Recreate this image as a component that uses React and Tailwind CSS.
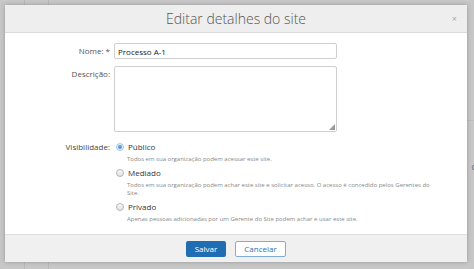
import React from "react";

const options = [
  {
    id: "publico",
    label: "Público",
    desc: "Todos em sua organização podem acessar este site.",
    checked: true,
  },
  {
    id: "mediado",
    label: "Mediado",
    desc: "Todos em sua organização podem achar este site e solicitar acesso. O acesso é concedido pelos Gerentes do Site.",
  },
  {
    id: "privado",
    label: "Privado",
    desc: "Apenas pessoas adicionadas por um Gerente do Site podem achar e usar este site.",
  },
];

function Radio({ checked }) {
  if (checked) {
    return (
      <span className="flex h-[8px] w-[8px] shrink-0 items-center justify-center rounded-full border border-[#a9c8e8] bg-[#e3eef9]">
        <span className="h-[4px] w-[4px] rounded-full bg-[#5b9bd8]" />
      </span>
    );
  }
  return (
    <span className="h-[8px] w-[8px] shrink-0 rounded-full border border-[#b5b5b5] bg-gradient-to-b from-[#f8f8f8] to-[#e2e2e2]" />
  );
}

export default function App() {
  return (
    <div className="relative h-[269px] w-[474px] overflow-hidden bg-[#c7c7c7] font-['Open_Sans',sans-serif]">
      {/* page behind the overlay */}
      <div className="flex h-full">
        <div className="w-[25px] border-r border-[#b9b9b9]" />
        <div className="w-[24px] border-r border-[#b9b9b9]" />
        <div className="flex flex-1 flex-col items-end">
          <div className="mt-[120px] h-px w-[8px] bg-[#bdbdbd]" />
          <div className="mt-[41px] mr-[-3px] text-[9px] leading-[10px] text-[#666]">d</div>
        </div>
      </div>

      {/* modal */}
      <div className="absolute inset-0 pl-[5px] pt-[5px] pr-[7px] pb-[7px]">
        <div className="flex h-full flex-col bg-white shadow-[0_0_4px_rgba(0,0,0,0.25)]">
          <div className="relative flex h-[28px] shrink-0 items-center justify-center border-b border-[#dadada] bg-[#eeeeee]">
            <h2 className="text-[14px] font-light text-[#555]">Editar detalhes do site</h2>
            <span className="absolute right-[10px] top-[9px] text-[9px] leading-[10px] text-[#aaa]">×</span>
          </div>

          <div className="flex-1 pt-[10px] text-[8px] text-[#555]">
            <div className="grid grid-cols-[105px_223px] gap-x-[4px]">
              <label className="flex h-[16px] items-center justify-end">Nome: *</label>
              <input
                defaultValue="Processo A-1"
                className="h-[16px] w-[223px] rounded-[2px] border border-[#cfcfcf] px-[3px] text-[8px] text-[#222] outline-none"
              />

              <label className="mt-[7px] pt-[3px] text-right leading-[10px]">Descrição:</label>
              <div className="relative mt-[7px]">
                <textarea className="block h-[66px] w-[223px] resize-none rounded-[2px] border border-[#cfcfcf] outline-none" />
                <svg className="absolute bottom-[2px] right-[2px]" width="6" height="6" viewBox="0 0 6 6">
                  <path d="M6 0 L6 6 L0 6 Z" fill="#9a9a9a" />
                </svg>
              </div>

              <label className="mt-[9px] text-right leading-[11px] text-[#444]">Visibilidade:</label>
              <div className="mt-[9px] w-[320px]">
                {options.map((o, i) => (
                  <div key={o.id} className={i > 0 ? "mt-[4px]" : ""}>
                    <div className="flex h-[11px] items-center gap-[4px] pl-[2px]">
                      <Radio checked={o.checked} />
                      <span className="text-[8px] leading-[11px] text-[#333]">{o.label}</span>
                    </div>
                    <p className="mt-[3px] pl-[13px] text-[6px] leading-[8px] text-[#888]">{o.desc}</p>
                  </div>
                ))}
              </div>
            </div>
          </div>

          <div className="flex h-[28px] shrink-0 items-start justify-center gap-[9px] border-t border-[#dedede] bg-[#f0f0f0] pt-[6px]">
            <button className="h-[16px] w-[40px] rounded-[2px] bg-[#1f6eb3] text-[8px] text-white">Salvar</button>
            <button className="h-[16px] w-[51px] rounded-[2px] border border-[#7eaed8] bg-white text-[8px] text-[#2c70b0]">
              Cancelar
            </button>
          </div>
        </div>
      </div>
    </div>
  );
}
